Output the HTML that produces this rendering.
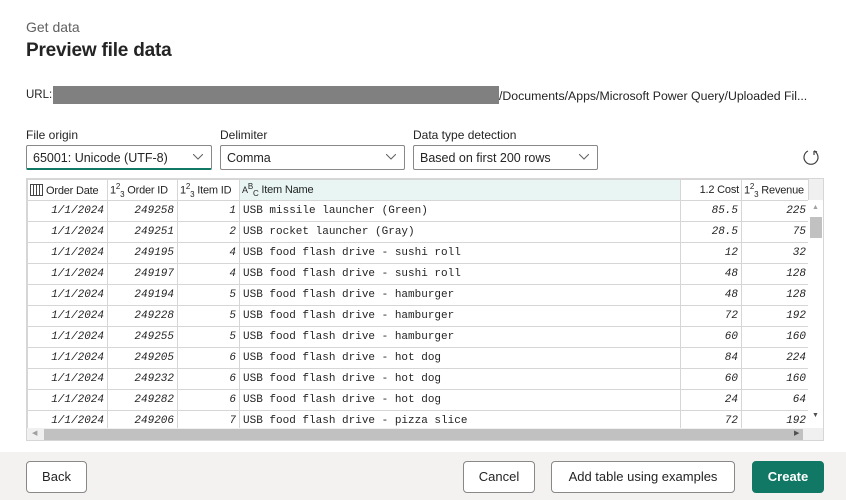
<!DOCTYPE html>
<html><head><meta charset="utf-8"><style>
*{box-sizing:border-box;margin:0;padding:0}
body{width:846px;height:500px;background:#fff;font-family:"Liberation Sans",sans-serif;color:#242424;position:relative;overflow:hidden}
.abs{position:absolute}
.sel{position:absolute;top:145px;height:25px;border:1px solid #8a8886;border-radius:2px;font-size:12.5px;padding:5px 6px;color:#242424}
.sel svg{position:absolute;right:8px;top:8px}
.lbl{position:absolute;top:128px;font-size:12px;color:#242424}
table{border-collapse:collapse;table-layout:fixed;font-size:11px}
td{height:21px;border:1px solid #d6d6d6;padding:0 3px;font-family:"Liberation Mono",monospace;white-space:nowrap;overflow:hidden}
td.n{text-align:right;font-style:italic}
th{height:21px;border:1px solid #d6d6d6;font-weight:normal;font-size:11px;text-align:left;padding:0 2px;white-space:nowrap;overflow:hidden;background:#fff;letter-spacing:-0.2px}
.btn{position:absolute;top:461px;height:32px;border:1px solid #8a8886;border-radius:4px;background:#fff;font-size:13px;text-align:center;line-height:30px;color:#242424}
sup,sub{font-size:8px}
</style></head><body>
<div class="abs" style="left:26px;top:19px;font-size:14px;color:#616161">Get data</div>
<div class="abs" style="left:26px;top:40px;font-size:19px;font-weight:bold;letter-spacing:-0.2px">Preview file data</div>
<div class="abs" style="left:26px;top:89px;font-size:11.5px">URL:</div>
<div class="abs" style="left:53px;top:86px;width:446px;height:18px;background:#808080"></div>
<div class="abs" style="left:499px;top:89px;font-size:12.3px">/Documents/Apps/Microsoft Power Query/Uploaded Fil...</div>
<div class="lbl" style="left:26px">File origin</div>
<div class="lbl" style="left:220px">Delimiter</div>
<div class="lbl" style="left:413px">Data type detection</div>
<div class="sel" style="left:26px;width:186px;border-bottom:2px solid #117865">65001: Unicode (UTF-8)<svg width="10" height="6"><path d="M0 0L5 5L10 0" stroke="#616161" fill="none"/></svg></div>
<div class="sel" style="left:220px;width:185px">Comma<svg width="10" height="6"><path d="M0 0L5 5L10 0" stroke="#616161" fill="none"/></svg></div>
<div class="sel" style="left:413px;width:185px">Based on first 200 rows<svg width="10" height="6"><path d="M0 0L5 5L10 0" stroke="#616161" fill="none"/></svg></div>
<svg class="abs" style="left:802px;top:148px" width="18" height="18"><path d="M6 3A7 7 0 1 0 12 3" stroke="#424242" fill="none" stroke-width="1.2"/><path d="M12 3L12 7M12 3L15 4" stroke="#424242" fill="none" stroke-width="1.2"/></svg>
<div class="abs" style="left:26px;top:178px;width:798px;height:263px;border:1px solid #d6d6d6;overflow:hidden">
<table style="width:782px">
<colgroup><col style="width:80px"><col style="width:70px"><col style="width:62px"><col style="width:441px"><col style="width:61px"><col style="width:68px"></colgroup>
<tr><th><span style="display:inline-block;width:13px;height:12px;border:1px solid #444;vertical-align:-2px;margin-right:3px;background:repeating-linear-gradient(90deg,#fff 0 2px,#444 2px 3px)"></span>Order Date</th><th>1<sup>2</sup><sub>3</sub> Order ID</th><th>1<sup>2</sup><sub>3</sub> Item ID</th><th style="background:#e8f5f2"><span style="font-size:9px">A<sup>B</sup><sub>C</sub></span> Item Name</th><th style="text-align:right">1.2 Cost</th><th>1<sup>2</sup><sub>3</sub> Revenue</th></tr>
<tr><td class="n">1/1/2024</td><td class="n">249258</td><td class="n">1</td><td>USB missile launcher (Green)</td><td class="n">85.5</td><td class="n">225</td></tr>
<tr><td class="n">1/1/2024</td><td class="n">249251</td><td class="n">2</td><td>USB rocket launcher (Gray)</td><td class="n">28.5</td><td class="n">75</td></tr>
<tr><td class="n">1/1/2024</td><td class="n">249195</td><td class="n">4</td><td>USB food flash drive - sushi roll</td><td class="n">12</td><td class="n">32</td></tr>
<tr><td class="n">1/1/2024</td><td class="n">249197</td><td class="n">4</td><td>USB food flash drive - sushi roll</td><td class="n">48</td><td class="n">128</td></tr>
<tr><td class="n">1/1/2024</td><td class="n">249194</td><td class="n">5</td><td>USB food flash drive - hamburger</td><td class="n">48</td><td class="n">128</td></tr>
<tr><td class="n">1/1/2024</td><td class="n">249228</td><td class="n">5</td><td>USB food flash drive - hamburger</td><td class="n">72</td><td class="n">192</td></tr>
<tr><td class="n">1/1/2024</td><td class="n">249255</td><td class="n">5</td><td>USB food flash drive - hamburger</td><td class="n">60</td><td class="n">160</td></tr>
<tr><td class="n">1/1/2024</td><td class="n">249205</td><td class="n">6</td><td>USB food flash drive - hot dog</td><td class="n">84</td><td class="n">224</td></tr>
<tr><td class="n">1/1/2024</td><td class="n">249232</td><td class="n">6</td><td>USB food flash drive - hot dog</td><td class="n">60</td><td class="n">160</td></tr>
<tr><td class="n">1/1/2024</td><td class="n">249282</td><td class="n">6</td><td>USB food flash drive - hot dog</td><td class="n">24</td><td class="n">64</td></tr>
<tr><td class="n">1/1/2024</td><td class="n">249206</td><td class="n">7</td><td>USB food flash drive - pizza slice</td><td class="n">72</td><td class="n">192</td></tr>
</table>
<div class="abs" style="left:781px;top:0;width:16px;height:21px;background:#f0f0f0;border-left:1px solid #d6d6d6"></div>
<div class="abs" style="left:781px;top:21px;width:16px;height:228px;background:#fff"></div>
<div class="abs" style="left:783px;top:38px;width:12px;height:21px;background:#c1c1c1"></div>
<div class="abs" style="left:785px;top:25px;font-size:7px;color:#a0a0a0">▲</div>
<div class="abs" style="left:785px;top:233px;font-size:7px;color:#505050">▼</div>
<div class="abs" style="left:0;top:249px;width:797px;height:13px;background:#f0f0f0"></div>
<div class="abs" style="left:17px;top:250px;width:759px;height:11px;background:#c1c1c1"></div>
<div class="abs" style="left:5px;top:250px;font-size:7px;color:#a0a0a0">◀</div>
<div class="abs" style="left:767px;top:250px;font-size:7px;color:#505050">▶</div>
</div>
<div class="abs" style="left:0;top:452px;width:846px;height:48px;background:#f3f2f1"></div>
<div class="btn" style="left:26px;width:61px">Back</div>
<div class="btn" style="left:463px;width:72px">Cancel</div>
<div class="btn" style="left:551px;width:184px">Add table using examples</div>
<div class="btn" style="left:752px;width:72px;background:#117865;border-color:#117865;color:#fff;font-weight:bold">Create</div>
</body></html>
